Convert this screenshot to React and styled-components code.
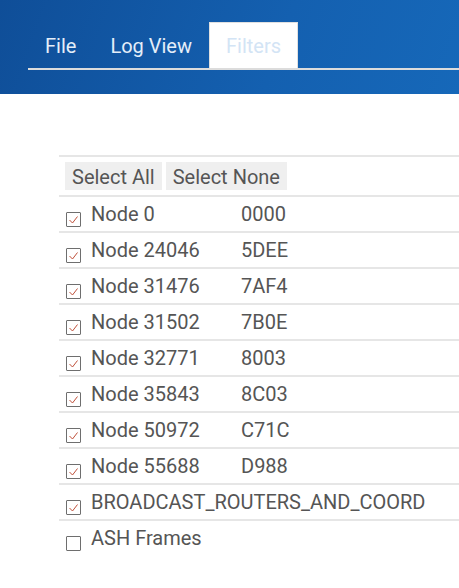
import styled, { createGlobalStyle } from 'styled-components';

const Global = createGlobalStyle`
  html, body { margin: 0; padding: 0; background: #fff; }
  body { font-family: Roboto, "Liberation Sans", Arial, sans-serif; }
`;

const nodes = [
  ['Node 0', '0000'],
  ['Node 24046', '5DEE'],
  ['Node 31476', '7AF4'],
  ['Node 31502', '7B0E'],
  ['Node 32771', '8003'],
  ['Node 35843', '8C03'],
  ['Node 50972', 'C71C'],
  ['Node 55688', 'D988'],
];

export default function App() {
  const tabs = ['File', 'Log View', 'Filters'];
  return (
    <Page>
      <Global />
      <Header>
        <TabBar>
          {tabs.map(t => (
            <Tab key={t} $active={t === 'Filters'}>{t}</Tab>
          ))}
        </TabBar>
      </Header>
      <Content>
        <FilterTable>
          <ButtonRow>
            <SmallButton>Select All</SmallButton>
            <SmallButton>Select None</SmallButton>
          </ButtonRow>
          {nodes.map(([name, id]) => (
            <Row key={name}>
              <Check checked />
              <Name>{name}</Name>
              <Hex>{id}</Hex>
            </Row>
          ))}
          <Row>
            <Check checked />
            <Name $wide>BROADCAST_ROUTERS_AND_COORD</Name>
          </Row>
          <Row $last>
            <Check />
            <Name $wide>ASH Frames</Name>
          </Row>
        </FilterTable>
      </Content>
    </Page>
  );
}

function Check({ checked }) {
  return (
    <Box>
      {checked && (
        <svg width="13" height="13" viewBox="0 0 13 13">
          <path d="M2.5 7 L5.5 10 L10.5 3.5" fill="none" stroke="#c0503a" strokeWidth="1" />
        </svg>
      )}
    </Box>
  );
}

const Page = styled.div`
  width: 459px;
  min-height: 588px;
  overflow: hidden;
`;

const Header = styled.header`
  height: 94px;
  background: linear-gradient(110deg, #0f4e98 0%, #1460b0 60%, #1668b9 100%);
  padding-top: 22px;
  padding-left: 28px;
  box-sizing: border-box;
`;

const TabBar = styled.nav`
  display: flex;
  height: 46px;
  border-bottom: 2px solid #dcdcdc;
`;

const Tab = styled.div`
  height: 46px;
  box-sizing: border-box;
  padding: 0 16px;
  display: flex;
  align-items: center;
  font-size: 20px;
  color: ${p => (p.$active ? '#d3e4f5' : '#e4eef9')};
  background: ${p => (p.$active ? '#fff' : 'transparent')};
  border: 1px solid ${p => (p.$active ? '#e0e0e0' : 'transparent')};
  border-bottom: none;
  margin-bottom: -1px;
`;

const Content = styled.main`
  padding: 61px 0 0 59px;
`;

const FilterTable = styled.div`
  border-top: 2px solid #e6e6e6;
`;

const ButtonRow = styled.div`
  display: flex;
  gap: 4px;
  padding: 5px 0 5px 6px;
  border-bottom: 2px solid #e6e6e6;
`;

const SmallButton = styled.button`
  font-family: Roboto, "Liberation Sans", Arial, sans-serif;
  font-size: 20px;
  color: #555;
  background: #efefef;
  border: none;
  height: 28px;
  padding: 1px 7px 0;
  line-height: 28px;
`;

const Row = styled.div`
  display: flex;
  align-items: center;
  height: 34px;
  border-bottom: 2px solid ${p => (p.$last ? 'transparent' : '#e6e6e6')};
  color: #555;
  font-size: 20px;
`;

const Box = styled.span`
  width: 15px;
  height: 15px;
  box-sizing: border-box;
  border: 1px solid #6e6e6e;
  border-radius: 1px;
  margin: 10px 10px 0 7px;
  display: flex;
  align-items: center;
  justify-content: center;
  background: #fff;
  flex: none;
`;

const Name = styled.span`
  width: ${p => (p.$wide ? 'auto' : '150px')};
  white-space: nowrap;
`;

const Hex = styled.span``;
